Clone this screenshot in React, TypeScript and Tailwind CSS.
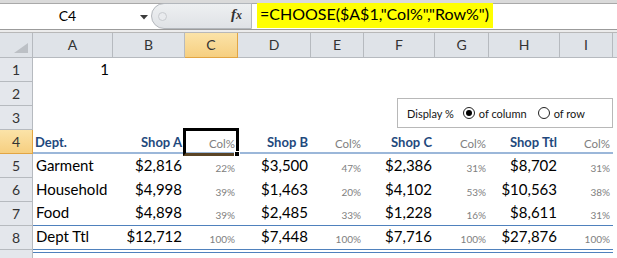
import React from "react";

const GRID =
  "grid grid-cols-[33px_80px_72px_53px_73px_53px_71px_54px_71px_53px_1fr]";

const letters = ["A", "B", "C", "D", "E", "F", "G", "H", "I"];

const data: string[][] = [
  ["Garment", "$2,816", "22%", "$3,500", "47%", "$2,386", "31%", "$8,702", "31%"],
  ["Household", "$4,998", "39%", "$1,463", "20%", "$4,102", "53%", "$10,563", "38%"],
  ["Food", "$4,898", "39%", "$2,485", "33%", "$1,228", "16%", "$8,611", "31%"],
  ["Dept Ttl", "$12,712", "100%", "$7,448", "100%", "$7,716", "100%", "$27,876", "100%"],
];

const header = ["Dept.", "Shop A", "Col%", "Shop B", "Col%", "Shop C", "Col%", "Shop Ttl", "Col%"];

function RowHdr({ n, active }: { n: number | string; active?: boolean }) {
  return (
    <div
      className={
        active
          ? "flex items-end justify-center pb-[4px] border-r border-b border-[#e2a543] bg-gradient-to-b from-[#fbe3a8] to-[#f6cf80] text-[14px] leading-none text-[#333]"
          : "flex items-end justify-center pb-[4px] border-r border-b border-[#b6babf] bg-[#e4e7ec] text-[14px] leading-none text-[#333]"
      }
    >
      <span>{n}</span>
    </div>
  );
}

export default function App() {
  return (
    <div className="relative w-[617px] h-[258px] overflow-hidden bg-white font-['Lato',sans-serif]">
      {/* top chrome */}
      <div className="h-[3px] bg-[#dadada]" />
      <div className="h-px bg-[#a9a9a9]" />
      <div className="flex h-[25px] bg-white">
        <div className="relative w-[151px] flex items-end pb-[6px]">
          <span className="w-[135px] text-center text-[14px] leading-none text-black">C4</span>
          <svg className="absolute left-[140px] top-[11px]" width="8" height="5" viewBox="0 0 8 5">
            <path d="M0 0 L8 0 L4 4.5 Z" fill="#3c3c3c" />
          </svg>
        </div>
        <div className="relative w-[101px] h-[26px] -mt-px rounded-l-[13px] border border-[#b3b7bc] bg-gradient-to-b from-[#eef0f2] to-[#dfe2e6]">
          <div className="absolute left-[6px] top-[8px] w-[9px] h-[9px] rounded-full border border-[#c8cbcf] bg-[#e9ebee]" />
          <span className="absolute left-[79px] top-[3px] font-['Liberation_Serif',serif] italic font-bold text-[15px] leading-none text-[#333]">
            f
            <span className="text-[12px]">x</span>
          </span>
        </div>
        <div className="flex-1 pl-[5px] flex items-stretch">
          <div className="mt-[-1px] mb-[1px] bg-[#ffff00] pl-[3px] pr-[4px] flex items-end pb-[6px]">
            <span className="text-[16px] leading-none text-black whitespace-nowrap">
              =CHOOSE($A$1,"Col%","Row%")
            </span>
          </div>
        </div>
      </div>
      <div className="h-px bg-[#9b9b9b]" />
      <div className="h-[2px] bg-[#ececec]" />
      <div className="h-px bg-[#b8b8b8]" />

      {/* grid */}
      <div className="relative">
        {/* column header */}
        <div className={`${GRID} h-[25px]`}>
          <div className="relative border-r border-b border-[#b6babf] bg-[#dfe3e8]">
            <svg className="absolute left-0 top-0" width="33" height="25" viewBox="0 0 33 25">
              <path d="M28 10 L28 20 L14 20 Z" fill="#bcc0c5" />
            </svg>
          </div>
          {letters.map((l) =>
            l === "C" ? (
              <div
                key={l}
                className="flex items-end justify-center pb-[5px] border-r border-b border-[#e2a543] bg-gradient-to-b from-[#fbe3a8] to-[#f6cf80] text-[14px] leading-none text-[#333]"
              >
                <span>{l}</span>
              </div>
            ) : (
              <div
                key={l}
                className="flex items-end justify-center pb-[5px] border-r border-b border-[#b6babf] bg-[#dfe3e8] text-[14px] leading-none text-[#333]"
              >
                <span>{l}</span>
              </div>
            )
          )}
          <div className="border-b border-[#b6babf] bg-[#dfe3e8]" />
        </div>

        {/* row 1 */}
        <div className={`${GRID} h-[24px]`}>
          <RowHdr n={1} />
          <div className="flex items-end justify-end pr-[4px] pb-[5px] text-[15px] leading-none text-black">
            <span>1</span>
          </div>
        </div>
        {/* rows 2, 3 */}
        <div className={`${GRID} h-[24px]`}>
          <RowHdr n={2} />
        </div>
        <div className={`${GRID} h-[24px]`}>
          <RowHdr n={3} />
        </div>

        {/* row 4 header */}
        <div className={`${GRID} h-[24px]`}>
          <RowHdr n={4} active />
          {header.map((h, i) =>
            i === 0 ? (
              <div
                key={i}
                className="flex items-end justify-start pl-[2px] pb-[3px] border-b-2 border-[#9bb7d9] text-[13px] font-bold leading-none text-[#1f497d]"
              >
                <span>{h}</span>
              </div>
            ) : i % 2 === 1 ? (
              <div
                key={i}
                className="flex items-end justify-end pr-[3px] pb-[3px] border-b-2 border-[#9bb7d9] text-[13px] font-bold leading-none text-[#1f497d]"
              >
                <span>{h}</span>
              </div>
            ) : (
              <div
                key={i}
                className="flex items-end justify-end pr-[3px] pb-[3px] border-b-2 border-[#9bb7d9] text-[11.5px] leading-none text-[#808080]"
              >
                <span>{h}</span>
              </div>
            )
          )}
        </div>

        {/* data rows */}
        {data.map((row, r) => (
          <div key={r} className={`${GRID} h-[24px]`}>
            <RowHdr n={r + 5} />
            {row.map((c, i) => {
              const line =
                r === 2 || r === 3 ? "border-b border-[#4f81bd]" : "";
              if (i === 0)
                return (
                  <div
                    key={i}
                    className={`flex items-end justify-start pl-[3px] pb-[5px] text-[15px] leading-none text-black ${line}`}
                  >
                    <span>{c}</span>
                  </div>
                );
              if (i % 2 === 1)
                return (
                  <div
                    key={i}
                    className={`flex items-end justify-end pr-[3px] pb-[5px] text-[15px] leading-none text-black ${line}`}
                  >
                    <span>{c}</span>
                  </div>
                );
              return (
                <div
                  key={i}
                  className={`flex items-end justify-end pr-[3px] pb-[5px] text-[10px] leading-none text-[#808080] ${line}`}
                >
                  <span>{c}</span>
                </div>
              );
            })}
          </div>
        ))}

        {/* row 9 partial */}
        <div className={`${GRID} h-[24px]`}>
          <RowHdr n="" />
          {letters.map((l) => (
            <div key={l} className="pt-[2px]">
              <div className="h-px bg-[#4f81bd]" />
            </div>
          ))}
        </div>

        {/* selection on C4 */}
        <div className="absolute left-[183px] top-[95px] w-[56px] h-[28px] border-[3px] border-black border-b-[#5b4526]" />
        <div className="absolute left-[234px] top-[118px] w-[6px] h-[6px] bg-black border border-white" />
      </div>

      {/* form control */}
      <div className="absolute left-[397px] top-[98px] w-[216px] h-[30px] border border-[#b8b8b8] bg-white flex items-center pl-[9px] text-[11px] leading-none text-[#151515]">
        <span className="mr-[9px]">Display %</span>
        <span className="w-[12px] h-[12px] rounded-full border border-[#222] bg-white flex items-center justify-center mr-[4px]">
          <span className="w-[6px] h-[6px] rounded-full bg-black" />
        </span>
        <span className="mr-[11px]">of column</span>
        <span className="w-[12px] h-[12px] rounded-full border border-[#222] bg-white mr-[4px]" />
        <span>of row</span>
      </div>
    </div>
  );
}
